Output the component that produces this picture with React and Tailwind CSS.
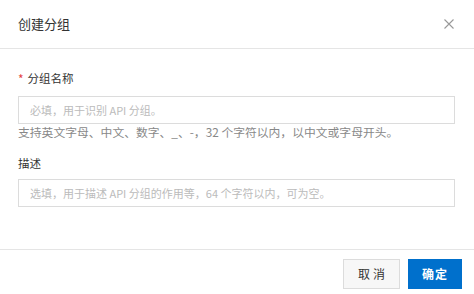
import React from 'react';

const font = { fontFamily: '"Noto Sans CJK SC", "Noto Sans", sans-serif' };

const App = () => {
    return (
        <div className="w-[474px] h-[294px] bg-white flex flex-col text-[#333]" style={font}>
            <div className="h-[49px] border-b border-[#e5e5e5] flex items-center justify-between pl-[18px] pr-[19px] shrink-0">
                <h1 className="text-[13px] leading-5">创建分组</h1>
                <button className="w-[12px] h-[12px] flex items-center justify-center text-[#999]">
                    <svg width="10" height="10" viewBox="0 0 10 10">
                        <path d="M0.5 0.5 L9.5 9.5 M9.5 0.5 L0.5 9.5" stroke="currentColor" strokeWidth="1.1" />
                    </svg>
                </button>
            </div>

            <div className="flex-1 px-[18px] pt-[20px]">
                <label className="flex items-center h-[20px] text-[11.5px]">
                    <span className="text-[#e54545] mr-[4px] text-[12px]">*</span>
                    分组名称
                </label>
                <div className="mt-[7px] w-[437px] h-[28px] border border-[#dcdcdc] flex items-center px-[11px] text-[11px] text-[#bbb]">
                    必填，用于识别 API 分组。
                </div>
                <p className="text-[11.8px] leading-4 text-[#888]">
                    支持英文字母、中文、数字、_、-，32 个字符以内，以中文或字母开头。
                </p>

                <label className="mt-[14px] flex items-center h-[20px] text-[11.5px]">描述</label>
                <div className="mt-[5px] w-[437px] h-[28px] border border-[#dcdcdc] flex items-center px-[11px] text-[11px] text-[#bbb]">
                    选填，用于描述 API 分组的作用等，64 个字符以内，可为空。
                </div>
            </div>

            <div className="h-[45px] border-t border-[#e5e5e5] flex items-start justify-end gap-[8px] pt-[9px] pr-[12px] shrink-0">
                <button className="w-[57px] h-[30px] border border-[#dcdcdc] bg-[#f7f7f7] text-[12px] text-[#333] tracking-[3px] pl-[3px]">
                    取消
                </button>
                <button className="w-[54px] h-[30px] bg-[#0070cc] text-[12px] text-white font-bold tracking-[1px]">
                    确定
                </button>
            </div>
        </div>
    );
};

export default App;
